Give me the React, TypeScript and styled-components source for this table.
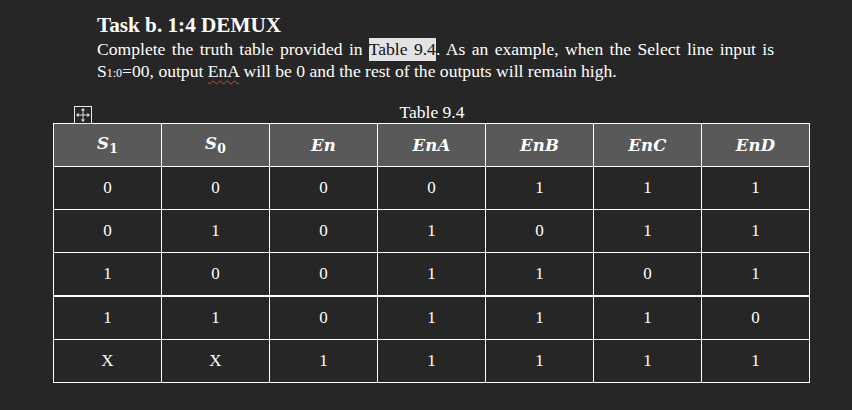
import React from 'react';
import styled, { createGlobalStyle } from 'styled-components';

const GlobalStyle = createGlobalStyle`
  html, body {
    margin: 0;
    padding: 0;
    background: #262626;
  }
  body {
    width: 852px;
    height: 410px;
    overflow: hidden;
    font-family: "Liberation Serif", "Times New Roman", serif;
    color: #ffffff;
  }
`;

const Page = styled.div`
  width: 852px;
  height: 410px;
  background: #262626;
  padding-top: 13px;
  box-sizing: border-box;
`;

const TextBlock = styled.div`
  margin-left: 97px;
  width: 677px;
`;

const Title = styled.h2`
  margin: 0;
  font-size: 21.2px;
  line-height: 24px;
  font-weight: bold;
`;

const Paragraph = styled.p`
  margin: 1px 0 0 0;
  font-size: 17.6px;
  line-height: 22px;
  text-align: justify;
  text-align-last: left;
`;

const FieldRef = styled.span`
  background: #e3e3e3;
  color: #111;
  padding: 1px 0 2px;
`;

const Small = styled.span`
  font-size: 0.68em;
`;

const Misspelled = styled.span`
  text-decoration: underline wavy #e0403c;
  text-decoration-thickness: 1px;
  text-underline-offset: 3px;
`;

const Caption = styled.div`
  margin-top: 18px;
  text-align: center;
  font-size: 17.5px;
  line-height: 20px;
  padding-left: 12px;
`;

const TableWrap = styled.div`
  position: relative;
  margin: 1px 0 0 53px;
  width: 757px;
`;

const MoveHandle = styled.div`
  position: absolute;
  left: 21px;
  top: -17px;
  width: 18px;
  height: 18px;
  border: 1px solid #e8e8e8;
  background: #262626;
  box-sizing: border-box;
  display: flex;
  align-items: center;
  justify-content: center;
`;

const Table = styled.table`
  border-collapse: collapse;
  table-layout: fixed;
  width: 757px;
`;

const HeadCell = styled.th`
  background: #595959;
  border: 1px solid #ffffff;
  height: 42px;
  padding: 0;
  font-family: "DejaVu Serif", "Liberation Serif", serif;
  font-weight: bold;
  font-style: italic;
  font-size: 16.5px;
  letter-spacing: 0.2px;
  text-align: center;
  vertical-align: middle;
  color: #ffffff;
`;

const Sub = styled.sub`
  font-size: 0.75em;
  font-style: normal;
  vertical-align: -0.3em;
`;

const Row = styled.tr<{ $thick?: boolean }>`
  & > td {
    border-top: ${(p) => (p.$thick ? '2px' : '1px')} solid #ffffff;
  }
`;

const Cell = styled.td`
  border: 1px solid #ffffff;
  height: 42px;
  padding: 0;
  font-size: 17px;
  text-align: center;
  vertical-align: middle;
`;

const rows = [
  ['0', '0', '0', '0', '1', '1', '1'],
  ['0', '1', '0', '1', '0', '1', '1'],
  ['1', '0', '0', '1', '1', '0', '1'],
  ['1', '1', '0', '1', '1', '1', '0'],
  ['X', 'X', '1', '1', '1', '1', '1'],
];

const MoveIcon = () => (
  <svg width="14" height="14" viewBox="0 0 14 14" fill="#dcdcdc">
    <rect x="6.5" y="2" width="1" height="10" />
    <rect x="2" y="6.5" width="10" height="1" />
    <polygon points="7,0 4.8,2.6 9.2,2.6" />
    <polygon points="7,14 4.8,11.4 9.2,11.4" />
    <polygon points="0,7 2.6,4.8 2.6,9.2" />
    <polygon points="14,7 11.4,4.8 11.4,9.2" />
  </svg>
);

export default function App() {
  return (
    <Page>
      <GlobalStyle />
      <TextBlock>
        <Title>Task b. 1:4 DEMUX</Title>
        <Paragraph>
          Complete the truth table provided in <FieldRef>Table 9.4</FieldRef>. As an example, when the Select line input is
          S<Small>1:0</Small>=00, output <Misspelled>EnA</Misspelled> will be 0 and the rest of the outputs will remain high.
        </Paragraph>
      </TextBlock>
      <Caption>Table 9.4</Caption>
      <TableWrap>
        <MoveHandle>
          <MoveIcon />
        </MoveHandle>
        <Table>
          <thead>
            <tr>
              <HeadCell>S<Sub>1</Sub></HeadCell>
              <HeadCell>S<Sub>0</Sub></HeadCell>
              <HeadCell>En</HeadCell>
              <HeadCell>EnA</HeadCell>
              <HeadCell>EnB</HeadCell>
              <HeadCell>EnC</HeadCell>
              <HeadCell>EnD</HeadCell>
            </tr>
          </thead>
          <tbody>
            {rows.map((row, i) => (
              <Row key={i} $thick={i === 3}>
                {row.map((v, j) => (
                  <Cell key={j}>{v}</Cell>
                ))}
              </Row>
            ))}
          </tbody>
        </Table>
      </TableWrap>
    </Page>
  );
}
